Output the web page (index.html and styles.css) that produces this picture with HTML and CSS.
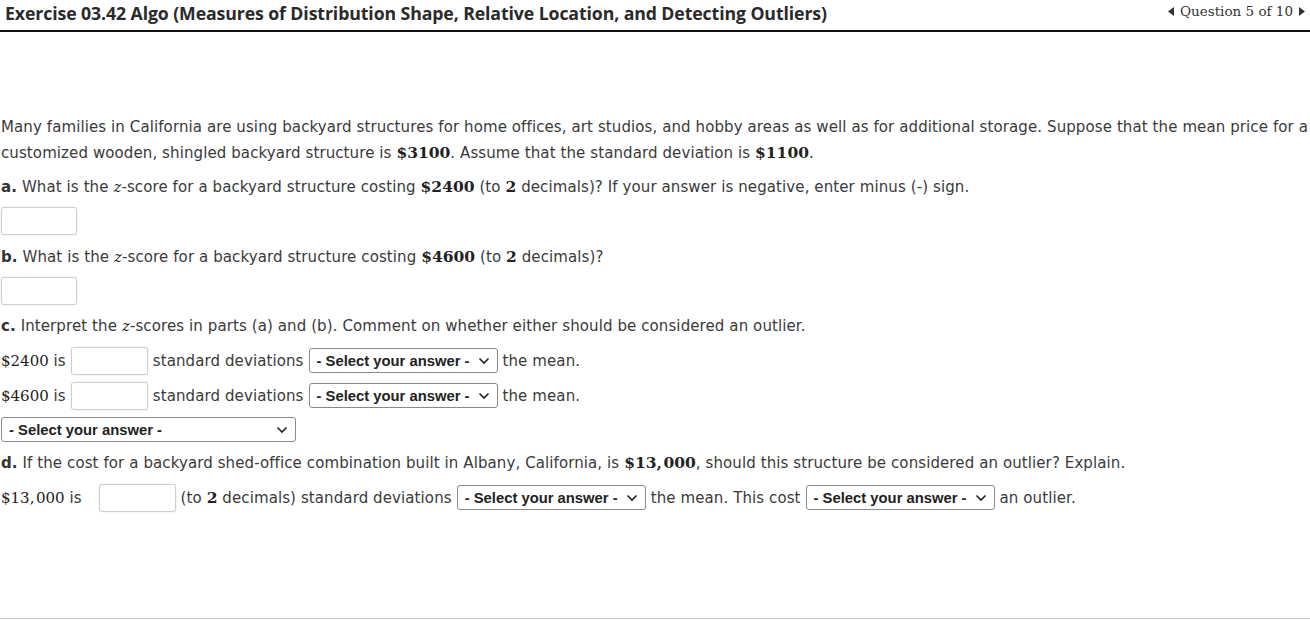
FILE: index.html
```html
<!DOCTYPE html>
<html>
<head>
<meta charset="utf-8">
<link rel="stylesheet" href="styles.css">
</head>
<body>
<div class="page">
  <header class="header">
    <h1 class="title">Exercise 03.42 Algo (Measures of Distribution Shape, Relative Location, and Detecting Outliers)</h1>
    <nav class="qnav">
      <svg class="tri" width="6" height="9" viewBox="0 0 6 9"><path d="M6 0V9L0 4.5Z" fill="#333"/></svg>
      <span>Question 5 of 10</span>
      <svg class="tri" width="6" height="9" viewBox="0 0 6 9"><path d="M0 0V9L6 4.5Z" fill="#333"/></svg>
    </nav>
  </header>
  <main class="content">
    <p class="intro">Many families in California are using backyard structures for home offices, art studios, and hobby areas as well as for additional storage. Suppose that the mean price for a customized wooden, shingled backyard structure is <span class="mb">$3100</span>. Assume that the standard deviation is <span class="mb">$1100</span>.</p>

    <p class="q qa"><b>a.</b> What is the <i class="mz">z</i>-score for a backyard structure costing <span class="mb">$2400</span> (to <span class="mb">2</span> decimals)? If your answer is negative, enter minus (-) sign.</p>
    <div class="box"></div>

    <p class="q qb"><b>b.</b> What is the <i class="mz">z</i>-score for a backyard structure costing <span class="mb">$4600</span> (to <span class="mb">2</span> decimals)?</p>
    <div class="box"></div>

    <p class="q qc"><b>c.</b> Interpret the <i class="mz">z</i>-scores in parts (a) and (b). Comment on whether either should be considered an outlier.</p>
    <div class="row r1">
      <span><span class="mr">$2400</span> is</span>
      <div class="box inrow"></div>
      <span>standard deviations</span>
      <div class="sel"><span>- Select your answer -</span><svg width="12" height="8" viewBox="0 0 12 8"><path d="M1.5 1.5L6 6L10.5 1.5" fill="none" stroke="#222" stroke-width="1.6"/></svg></div>
      <span>the mean.</span>
    </div>
    <div class="row">
      <span><span class="mr">$4600</span> is</span>
      <div class="box inrow"></div>
      <span>standard deviations</span>
      <div class="sel"><span>- Select your answer -</span><svg width="12" height="8" viewBox="0 0 12 8"><path d="M1.5 1.5L6 6L10.5 1.5" fill="none" stroke="#222" stroke-width="1.6"/></svg></div>
      <span>the mean.</span>
    </div>
    <div class="sel wide"><span>- Select your answer -</span><svg width="12" height="8" viewBox="0 0 12 8"><path d="M1.5 1.5L6 6L10.5 1.5" fill="none" stroke="#222" stroke-width="1.6"/></svg></div>

    <p class="q qd"><b>d.</b> If the cost for a backyard shed-office combination built in Albany, California, is <span class="mb">$13,&#8202;000</span>, should this structure be considered an outlier? Explain.</p>
    <div class="row rd">
      <span><span class="mr">$13,&#8202;000</span> is</span>
      <div class="box inrow wideleft"></div>
      <span>(to <span class="mb">2</span> decimals) standard deviations</span>
      <div class="sel"><span>- Select your answer -</span><svg width="12" height="8" viewBox="0 0 12 8"><path d="M1.5 1.5L6 6L10.5 1.5" fill="none" stroke="#222" stroke-width="1.6"/></svg></div>
      <span>the mean. This cost</span>
      <div class="sel"><span>- Select your answer -</span><svg width="12" height="8" viewBox="0 0 12 8"><path d="M1.5 1.5L6 6L10.5 1.5" fill="none" stroke="#222" stroke-width="1.6"/></svg></div>
      <span>an outlier.</span>
    </div>
  </main>
  <footer class="footer"></footer>
</div>
</body>
</html>
```

FILE: styles.css
```css
* { box-sizing: border-box; }
html, body { margin: 0; padding: 0; background: #fff; }
.page {
  height: 621px;
  display: flex;
  flex-direction: column;
  overflow: hidden;
}
.header {
  height: 32px;
  display: flex;
  justify-content: space-between;
  align-items: center;
  border-bottom: 2px solid #111;
  padding: 0 5px 0 5px;
}
.title {
  margin: -4px 0 0 0;
  font-family: "Open Sans", sans-serif;
  font-weight: 700;
  font-size: 17.7px;
  color: #2a2a2a;
  letter-spacing: -0.1px;
}
.qnav {
  display: flex;
  align-items: center;
  gap: 6px;
  font-family: "DejaVu Serif", serif;
  font-size: 13.5px;
  color: #333;
  margin-top: -8px;
}
.content {
  flex: 1;
  padding: 82px 0 0 1px;
  font-family: "DejaVu Sans", Verdana, sans-serif;
  font-size: 15px;
  letter-spacing: 0.1px;
  line-height: 26px;
  color: #3a3a3a;
}
.intro { margin: 0; }
.q { margin: 0; }
.qa { margin-top: 8px; }
.qb { margin-top: 9px; }
.qc { margin-top: 8px; }
.qd { margin-top: 8px; }
.q b { font-weight: 700; color: #333; }
.mb {
  font-family: "DejaVu Serif", serif;
  font-weight: 700;
  font-size: 15.5px;
  line-height: 1;
  letter-spacing: 0;
  color: #222;
}
.mr {
  font-family: "DejaVu Serif", serif;
  font-size: 15px;
  line-height: 1;
  letter-spacing: 0;
  color: #222;
}
.mz {
  font-family: "DejaVu Serif", serif;
  font-style: italic;
  font-size: 15px;
  line-height: 1;
  color: #222;
}
.box {
  width: 76px;
  height: 28px;
  margin-top: 7px;
  border: 1px solid #cfcfcf;
  border-radius: 3px;
  box-shadow: 0 0 2px rgba(0,0,0,0.12);
  background: #fff;
}
.row {
  height: 35px;
  display: flex;
  align-items: center;
  gap: 5px;
}
.r1 { margin-top: 4px; }
.rd { margin-top: 4px; }
.box.inrow { margin-top: 0; width: 77px; }
.box.wideleft { margin-left: 12px; }
.sel {
  width: 189px;
  height: 25px;
  flex: none;
  border: 1px solid #8a8a8a;
  border-radius: 3px;
  display: flex;
  align-items: center;
  justify-content: space-between;
  padding: 0 7px 0 7px;
  font-family: "Liberation Sans", Arial, sans-serif;
  font-weight: 700;
  font-size: 14.8px;
  letter-spacing: 0;
  color: #222;
  background: #fff;
}
.sel.wide {
  width: 295px;
  margin-top: 4px;
}
.footer {
  height: 3px;
  border-top: 1px solid #c6c6c6;
}
```
